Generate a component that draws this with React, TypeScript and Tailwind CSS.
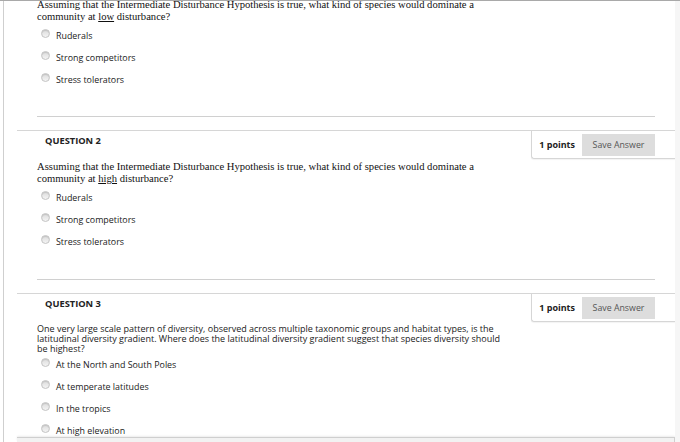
import React from 'react'

type Question = {
  label?: string
  prompt: React.ReactNode
  serif: boolean
  options: string[]
}

const questions: Question[] = [
  {
    prompt: (
      <>
        Assuming that the Intermediate Disturbance Hypothesis is true, what kind of species would dominate a<br />
        community at <u>low</u> disturbance?
      </>
    ),
    serif: true,
    options: ['Ruderals', 'Strong competitors', 'Stress tolerators'],
  },
  {
    label: 'QUESTION 2',
    prompt: (
      <>
        Assuming that the Intermediate Disturbance Hypothesis is true, what kind of species would dominate a<br />
        community at <u>high</u> disturbance?
      </>
    ),
    serif: true,
    options: ['Ruderals', 'Strong competitors', 'Stress tolerators'],
  },
  {
    label: 'QUESTION 3',
    prompt: (
      <>
        One very large scale pattern of diversity, observed across multiple taxonomic groups and habitat types, is the<br />
        latitudinal diversity gradient. Where does the latitudinal diversity gradient suggest that species diversity should<br />
        be highest?
      </>
    ),
    serif: false,
    options: ['At the North and South Poles', 'At temperate latitudes', 'In the tropics', 'At high elevation'],
  },
]

function Radio() {
  return (
    <span className="mt-[4px] ml-[2px] h-[9px] w-[9px] shrink-0 rounded-full border border-[#c4c4c4] bg-gradient-to-b from-[#dcdcdc] to-[#f4f4f4] shadow-[inset_0_1px_1px_rgba(0,0,0,0.12)]" />
  )
}

function QuestionBlock({ q, first, last }: { q: Question; first: boolean; last: boolean }) {
  return (
    <div className={first ? '-mt-[2px]' : 'mt-[13px]'}>
      {/* header row */}
      {q.label && (
        <div className="flex h-[28px] items-start justify-between border-t border-[#d6d6d6]">
          <div className="pl-[28px] pt-[4px] text-[9.3px] font-bold leading-[12px] text-[#222]">{q.label}</div>
          <div className="flex h-[28px] items-center gap-[7px] rounded-bl-[3px] border-b border-l border-[#d6d6d6] pl-[7px] pr-[20px] shadow-[0_1px_1px_rgba(0,0,0,0.05)]">
            <span className="text-[9px] font-bold leading-[12px] text-[#222]">1 points</span>
            <span className="flex h-[22px] w-[73px] items-center justify-center bg-[#dddddd] text-[8.8px] leading-[12px] text-[#555]">Save Answer</span>
          </div>
        </div>
      )}

      <div className={first ? 'px-[20px]' : 'px-[20px] pt-[3px]'}>
        {q.serif ? (
          <p className="font-['Liberation_Serif',serif] text-[10.6px] leading-[12px] text-[#111]">{q.prompt}</p>
        ) : (
          <p className="text-[9px] leading-[10px] text-[#222]">{q.prompt}</p>
        )}

        <div className={q.serif ? 'mt-[2px]' : ''}>
          {q.options.map((o) => (
            <div key={o} className="flex h-[22px] items-start gap-[6px] pl-[2px]">
              <Radio />
              <span className="pt-[5px] text-[8.9px] leading-[12px] text-[#222]">{o}</span>
            </div>
          ))}
        </div>

        {!last && <div className={first ? 'mt-[25px] border-t border-[#d0d0d0]' : 'mt-[26px] border-t border-[#d0d0d0]'} />}
      </div>
    </div>
  )
}

export default function App() {
  return (
    <div className="flex h-[442px] w-[680px] flex-col overflow-hidden bg-white font-['Open_Sans',sans-serif]">
      <div className="h-[1px] shrink-0 bg-[#a9a9a9]" />
      <div className="flex min-h-0 flex-1">
        <div className="w-[3px] shrink-0 bg-white" />
        <div className="flex min-w-0 flex-1 flex-col border-l border-[#cfcfcf] pl-[13px]">
          <div className="min-h-0 flex-1 overflow-hidden">
            {questions.map((q, i) => (
              <QuestionBlock key={i} q={q} first={i === 0} last={i === questions.length - 1} />
            ))}
          </div>
          <div className="h-[5px] shrink-0 border-t border-r border-[#cfcfcf] bg-[#f2f2f2] shadow-[0_-1px_2px_rgba(0,0,0,0.08)]" />
        </div>
        <div className="w-[5px] shrink-0 bg-[#f6f6f6]" />
      </div>
    </div>
  )
}
